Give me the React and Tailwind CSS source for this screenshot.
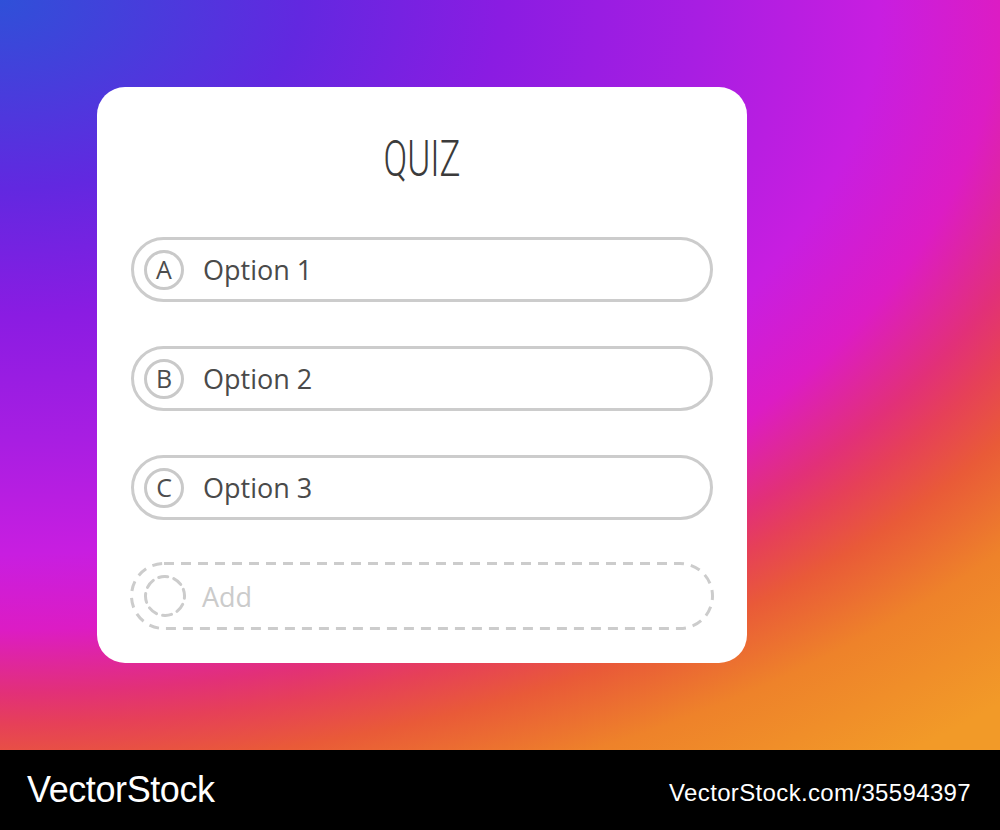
import React from "react";

// ── Quiz option pill ─────────────────────────────────────────────────────────
const OPTIONS = [
  { letter: "A", label: "Option 1" },
  { letter: "B", label: "Option 2" },
  { letter: "C", label: "Option 3" },
];

const OptionPill = ({ letter, label }) => (
  <div className="flex items-center h-[65px] rounded-full border-[3px] border-[#cccccc] pl-[10px]">
    <div className="w-10 h-10 rounded-full border-[3px] border-[#c9c9c9] flex items-center justify-center text-[25px] leading-none text-[#4d4d4d]">
      {letter}
    </div>
    <span className="ml-[19px] text-[27px] leading-none text-[#4a4a4a]">{label}</span>
  </div>
);

// dashed outline drawn as svg so the dash rhythm matches
const AddPill = () => (
  <div className="relative flex items-center h-[68px] -mx-px pl-[14px]">
    <svg className="absolute inset-0 pointer-events-none" width="584" height="68" viewBox="0 0 584 68">
      <rect
        x="1.5"
        y="1.5"
        width="581"
        height="65"
        rx="32.5"
        fill="none"
        stroke="#cccccc"
        strokeWidth="3"
        strokeDasharray="10 7"
      />
    </svg>
    <svg width="42" height="42" viewBox="0 0 42 42" className="shrink-0">
      <circle
        cx="21"
        cy="21"
        r="19.5"
        fill="none"
        stroke="#cccccc"
        strokeWidth="3"
        strokeDasharray="9 6.3"
        strokeLinecap="round"
        transform="rotate(-20 21 21)"
      />
    </svg>
    <span className="ml-[16px] text-[27px] leading-none text-[#cbcbcb]">Add</span>
  </div>
);

export default function App() {
  return (
    <div className="w-[1000px] h-[830px] flex flex-col font-['Open_Sans',sans-serif]">
      {/* Gradient backdrop with the quiz card */}
      <div className="h-[750px] pt-[87px] pl-[97px] bg-[radial-gradient(1000px_630px_at_0%_0%,#2f50d8_0%,#6228e0_30%,#8a1ce2_50%,#a81ee2_70%,#c81ee0_88%,#dc1cc4_100%,#e23078_110%,#e64058_115%,#e95a38_122%,#ee822a_133%,#f29a28_150%)]">
        <div className="w-[650px] h-[576px] bg-white rounded-[28px] px-[34px] pt-[47px] pb-[33px] flex flex-col">
          <div className="h-[50px] flex justify-center">
            <span className="inline-block scale-x-[0.7] font-['Roboto',sans-serif] font-light text-[50px] leading-[50px] text-[#3b3b3b]">
              QUIZ
            </span>
          </div>
          <div className="mt-[53px] flex flex-col gap-[44px]">
            {OPTIONS.map((o) => (
              <OptionPill key={o.letter} {...o} />
            ))}
          </div>
          <div className="mt-[42px]">
            <AddPill />
          </div>
        </div>
      </div>

      {/* Watermark footer */}
      <div className="h-[80px] bg-black flex justify-between items-start px-[27px] font-['Liberation_Sans',Arial,sans-serif] text-white">
        <span className="pt-[22px] text-[36px] leading-none tracking-[-0.4px]">VectorStock</span>
        <span className="pt-[31px] pr-[2px] text-[24px] leading-none tracking-[0.35px]">VectorStock.com/35594397</span>
      </div>
    </div>
  );
}
